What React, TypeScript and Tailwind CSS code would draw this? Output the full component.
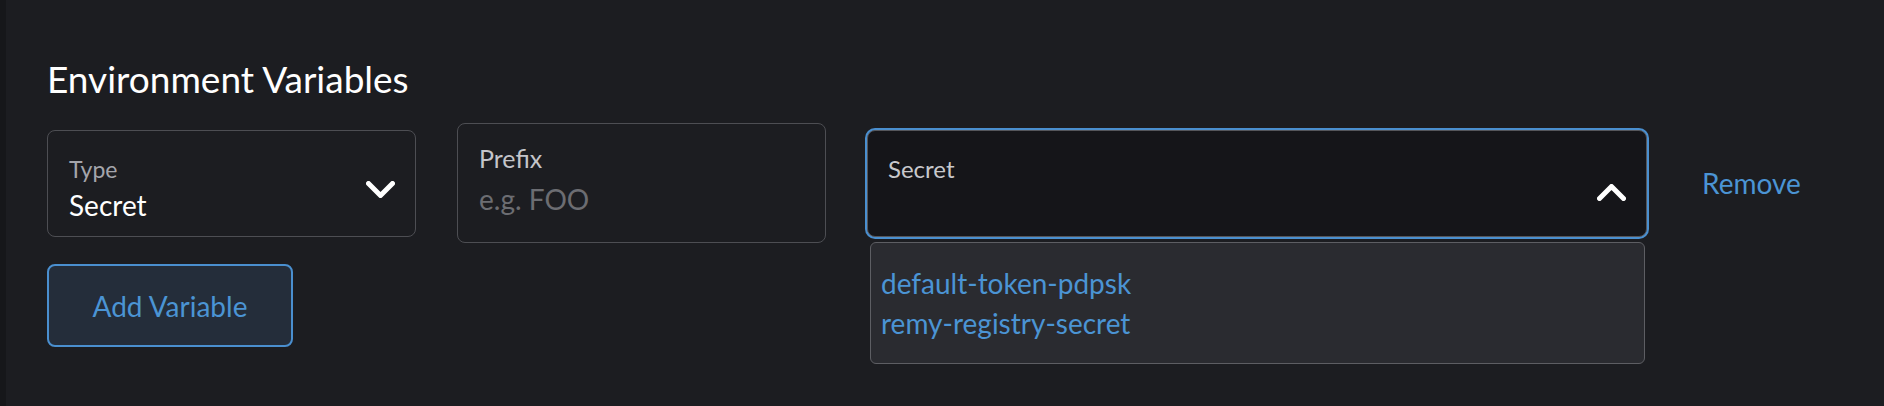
import { useState } from 'react';

const ChevronIcon = ({ up = false }: { up?: boolean }) => (
  <svg width="29" height="17" viewBox="0 0 29 17" fill="none" className="shrink-0">
    <polyline
      points={up ? '2.5,14.5 14.5,2.5 26.5,14.5' : '2.5,2.5 14.5,14.5 26.5,2.5'}
      stroke="#ffffff"
      strokeWidth="5"
      strokeLinecap="round"
      strokeLinejoin="round"
    />
  </svg>
);

const secrets = ['default-token-pdpsk', 'remy-registry-secret'];

export default function App() {
  const [prefix, setPrefix] = useState('');

  return (
    <div className="flex min-h-screen bg-[#1c1d21] font-['Lato',_'Liberation_Sans',_sans-serif]">
      <div className="w-[6px] shrink-0 bg-[#16171a]" />
      <div className="flex flex-1 flex-col pl-[41px] pt-[59px]">
        <h2 className="text-[37px] leading-[40px] text-white">Environment Variables</h2>

        <div className="mt-[24px] flex items-center">
          {/* Type select */}
          <div className="flex h-[107px] w-[369px] items-center justify-between rounded-lg border border-[#4d4e53] pl-[21px] pr-[20px]">
            <div className="flex flex-col pt-[11px]">
              <span className="text-[23px] leading-[24px] text-[#a4a5ab]">Type</span>
              <span className="mt-[8px] text-[28px] leading-[32px] text-white">Secret</span>
            </div>
            <div className="mt-[12px]">
              <ChevronIcon />
            </div>
          </div>

          {/* Prefix input */}
          <div className="ml-[41px] flex h-[120px] w-[369px] flex-col rounded-lg border border-[#4d4e53] px-[21px] pt-[20px]">
            <span className="text-[25px] leading-[28px] text-[#c4c5ca]">Prefix</span>
            <input
              value={prefix}
              onChange={(e) => setPrefix(e.target.value)}
              placeholder="e.g. FOO"
              className="mt-[11px] bg-transparent text-[28px] leading-[32px] text-white placeholder:text-[#6c6d72] focus:outline-none"
            />
          </div>

          {/* Secret select, open */}
          <div className="relative ml-[41px] w-[780px]">
            <div className="flex h-[107px] items-start justify-between rounded-lg border border-[#55565b] bg-[#151519] px-[20px] pt-[24px] ring-2 ring-[#4a8fcf]">
              <span className="text-[24px] leading-[28px] text-[#c8c8cc]">Secret</span>
              <div className="mt-[29px]">
                <ChevronIcon up />
              </div>
            </div>
            <ul className="absolute left-[3px] right-[2px] top-[112px] rounded-md border border-[#5d5e63] bg-[#2a2b30] px-[10px] py-[20px]">
              {secrets.map((s) => (
                <li key={s} className="cursor-pointer text-[28px] leading-[40px] text-[#4b94d4]">
                  {s}
                </li>
              ))}
            </ul>
          </div>

          <button className="ml-[55px] text-[28px] leading-[32px] text-[#4b94d4]">Remove</button>
        </div>

        <div className="mt-[21px]">
          <button className="flex h-[83px] w-[246px] items-center justify-center rounded-lg border-2 border-[#4a8fcf] bg-[#242d3a] text-[28px] leading-[32px] text-[#4b94d4]">
            Add Variable
          </button>
        </div>
      </div>
    </div>
  );
}
